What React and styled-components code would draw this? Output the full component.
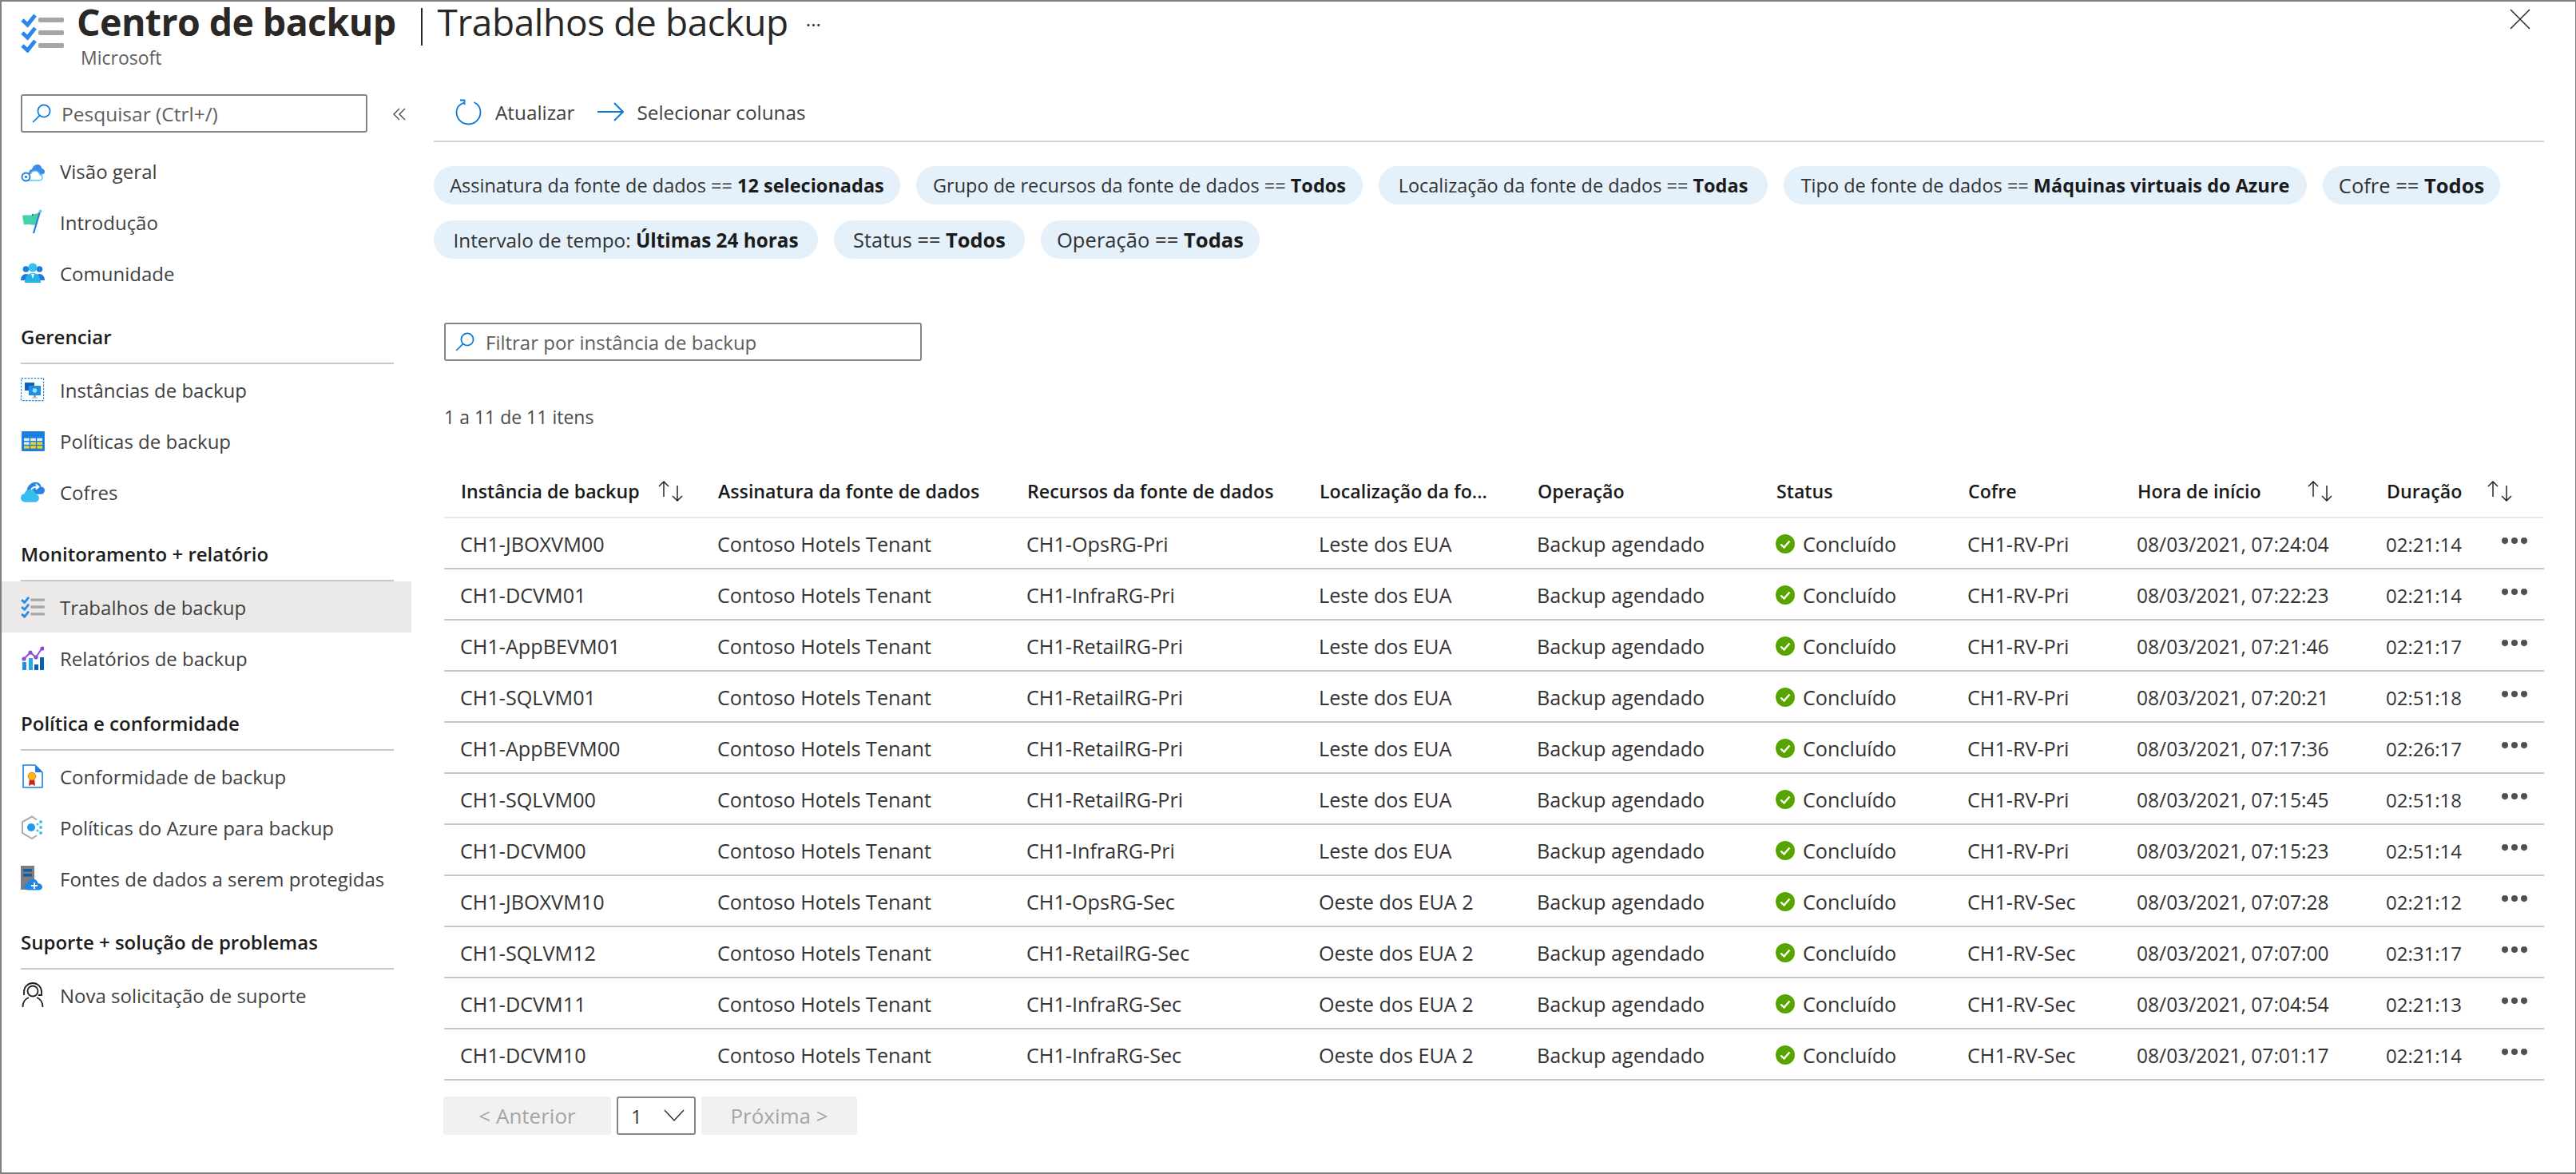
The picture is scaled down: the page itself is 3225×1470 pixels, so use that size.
import React from 'react';
import styled, { createGlobalStyle } from 'styled-components';

const Global = createGlobalStyle`
  html, body { margin: 0; padding: 0; background: #fff; }
  body { font-family: "Open Sans", "Noto Sans", sans-serif; color: #323130; }
  * { box-sizing: border-box; }
`;

const Page = styled.div`
  width: 3225px; height: 1470px; background: #fff;
  border: 2px solid #808080; border-right-width: 1px;
  display: flex; flex-direction: column; overflow: hidden;
`;
const Header = styled.header`
  height: 98px; display: flex; align-items: flex-start; padding: 0 0 0 24px; position: relative;
`;
const LogoSlot = styled.div`margin-top: 14px; width: 54px; height: 50px; flex: none;`;
const TitleBlock = styled.div`margin-left: 16px; display: flex; flex-direction: column;`;
const TitleRow = styled.div`display: flex; align-items: center; height: 46px; margin-top: 2px;`;
const Title = styled.h1`
  margin: 0; font-size: 46.500px; font-weight: 700; color: #292827; line-height: 46px; letter-spacing: -0.6px; white-space: nowrap;
`;
const Pipe = styled.span`width: 2px; height: 47px; background: #292827; margin: 13px 0 0 32px; flex: none;`;
const Sub = styled.h2`
  margin: 0 0 0 18px; font-size: 46px; font-weight: 400; color: #292827; line-height: 46px; letter-spacing: -0.4px; white-space: nowrap;
`;
const More = styled.span`margin: 8px 0 0 22px; font-size: 24px; line-height: 20px; color: #323130; letter-spacing: 0;`;
const Org = styled.div`font-size: 23px; color: #5f5e5c; line-height: 28px; margin-left: 5px; margin-top: 8px;`;
const Close = styled.div`position: absolute; right: 56px; top: 9px; width: 26px; height: 26px;`;

const Body = styled.div`flex: 1; display: flex; min-height: 0;`;
const Sidebar = styled.nav`width: 513px; flex: none; padding-top: 18px; display: flex; flex-direction: column;`;
const SearchRow = styled.div`display: flex; align-items: center; padding-left: 24px;`;
const SearchBox = styled.div`
  width: ${p => p.$w}px; height: 48px; border: 2px solid #858585; border-radius: 3px; display: flex; align-items: center;
  padding-left: ${p => p.$pad}px; gap: ${p => p.$gap}px; font-size: ${p => p.$fs || 24}px; color: #5f5e5c; flex: none;
`;
const Collapse = styled.div`margin-left: 32px; width: 16px; height: 16px;`;
const NavGroup = styled.div`display: flex; flex-direction: column; margin-top: ${p => p.$mt || 0}px;`;
const NavItem = styled.a`
  height: 64px; display: flex; align-items: center; padding-left: 24px; font-size: 24px; color: #3f3f3f;
  background: ${p => (p.$active ? '#ebeae9' : 'transparent')};
`;
const NavIcon = styled.span`width: 30px; height: 30px; flex: none; margin-right: 19px; display: flex; align-items: center; justify-content: center;`;
const SectionTitle = styled.div`
  height: ${p => p.$h}px; margin: 0 22px 0 24px; padding-bottom: 16px; display: flex; align-items: flex-end;
  border-bottom: 2px solid #c8c8c8; font-size: 24px; font-weight: 600; color: #1d1d1d;
`;

const Main = styled.main`flex: 1; min-width: 0; padding-left: 28px; display: flex; flex-direction: column;`;
const Toolbar = styled.div`
  width: 2642px; height: 78px; border-bottom: 2px solid #d3d3d3; display: flex; align-items: center; padding: 4px 0 0 27px; font-size: 24.300px; color: #3f3f3f;
`;
const ToolButton = styled.div`display: flex; align-items: center; gap: ${p => p.$gap}px; margin-right: 28px;`;
const ChipRow = styled.div`display: flex; gap: 20px; margin-top: ${p => p.$mt}px;`;
const Chip = styled.div`
  width: ${p => p.$w}px; height: 48px; border-radius: 24px; background: #e4f0fa; font-size: ${p => p.$fs || 23.500}px; display: flex; align-items: center; justify-content: center; color: #333; white-space: pre;
  b { font-weight: 700; color: #1b1b1b; }
`;
const FilterWrap = styled.div`margin: 80px 0 0 13px;`;
const Count = styled.div`margin: 52px 0 0 13px; height: 36px; line-height: 36px; font-size: 23px; color: #4a4a4a;`;
const Table = styled.div`margin: 42px 0 0 13px; width: 2629px;`;
const COLS = '322px 387px 366px 273px 299px 240px 212px 312px 1fr';
const HeadRow = styled.div`
  display: grid; grid-template-columns: ${COLS}; height: 67px; padding-left: 21px; align-items: center; border-bottom: 2px solid #e9e9e9;
  font-size: 23.200px; font-weight: 600; color: #1a1a1a;
`;
const HeadCell = styled.div`display: flex; align-items: center; gap: ${p => p.$gap || 0}px; white-space: nowrap;`;
const Row = styled.div`
  display: grid; grid-template-columns: ${COLS}; height: 64px; padding: 2px 0 0 20px; align-items: center; border-bottom: 2px solid #c8c8c8;
  font-size: 25.200px; color: #333; white-space: nowrap;
`;
const NumCell = styled.div`font-size: ${p => p.$fs}px;`;
const StatusCell = styled.div`display: flex; align-items: center; gap: 10px;`;
const EndCell = styled.div`display: flex; align-items: center; position: relative; font-size: 24px;`;
const Dots = styled.span`
  position: absolute; left: 145px; top: 50%; margin-top: -8px; display: flex; gap: 4px;
  i { width: 8px; height: 8px; border-radius: 50%; background: #505050; display: block; }
`;
const Pager = styled.div`display: flex; gap: 7px; margin: 20px 0 0 12px;`;
const PageBtn = styled.div`
  width: ${p => p.$w}px; height: 48px; border-radius: 3px; background: #f2f1f0; color: #a5a5a5; font-size: 26px; display: flex; align-items: center; justify-content: center;
`;
const PageSelect = styled.div`
  width: 99px; height: 48px; border: 2px solid #858585; border-radius: 3px; display: flex; align-items: center; justify-content: space-between; padding: 0 12px 0 16px; font-size: 24px; color: #333;
`;

const CheckList = ({ w = 54, h = 50 }) => (
  <svg width={w} height={h} viewBox="0 0 54 50" fill="none">
    <g stroke="#2b88e8" strokeWidth="5" strokeLinecap="butt">
      <path d="M2 9l6.5 6L18 3" /><path d="M2 25l6.5 6L18 19" /><path d="M2 41l6.5 6L18 35" />
    </g>
    <g fill="#a6a6a6">
      <rect x="22" y="6" width="32" height="6" rx="2" /><rect x="22" y="22" width="32" height="6" rx="2" /><rect x="22" y="38" width="32" height="6" rx="2" />
    </g>
  </svg>
);
const Magnifier = ({ s = 24 }) => (
  <svg width={s} height={s} viewBox="0 0 24 24" fill="none" stroke="#0a78d6" strokeWidth="1.7">
    <circle cx="15" cy="9" r="7.6" /><path d="M9.6 14.6L1.2 23" />
  </svg>
);
const IcoCloud = () => (
  <svg width="30" height="30" viewBox="0 0 30 30">
    <path d="M10 18c0-3 2-5 4-5 1-3 3-6 7-6 3 0 5 2 5.500 5 2 .3 3.500 2 3.500 4 0 2-1.500 3.500-3.500 3.500H12c-1 0-2-.5-2-1.500z" fill="#3b8dec" />
    <path d="M6 27h17c2.500 0 4-1.700 4-3.700 0-2-1.500-3.300-3.300-3.500-.5-2.800-3-4.800-5.700-4.800-2.500 0-4.600 1.500-5.500 3.700" fill="#fff" stroke="#5ec8f2" strokeWidth="1.500" />
    <circle cx="6.500" cy="22.500" r="5" fill="#fff" stroke="#1b79d8" strokeWidth="1.800" /><circle cx="6.500" cy="22.500" r="1.600" fill="#1b79d8" />
  </svg>
);
const IcoFlag = () => (
  <svg width="30" height="32" viewBox="0 0 30 32">
    <path d="M2 8c5-2 9 .5 13-1l8-3-4 15c-5 2-9-1-15 .5z" fill="#46d0ac" />
    <path d="M16 30L24 3" stroke="#1f7fe0" strokeWidth="2.200" /><circle cx="24.500" cy="2.500" r="2" fill="#7cc4f0" />
    <circle cx="15" cy="7" r="1.200" fill="#2a7f6f" />
  </svg>
);
const IcoPeople = () => (
  <svg width="30" height="26" viewBox="0 0 30 26">
    <circle cx="6.500" cy="8" r="3.800" fill="#1f7bd6" /><circle cx="23.500" cy="8" r="3.800" fill="#1f7bd6" />
    <path d="M0 22c0-5 3-8 6.500-8S13 17 13 22z" fill="#1f7bd6" /><path d="M17 22c0-5 3-8 6.500-8s6.500 3 6.500 8z" fill="#1f7bd6" />
    <circle cx="15" cy="6" r="5.500" fill="#37bff0" /><path d="M5 25c0-8 4-12 10-12s10 4 10 12z" fill="#27b0e6" /><path d="M13 14l2 6 2-6z" fill="#fff" />
  </svg>
);
const IcoInstances = () => (
  <svg width="30" height="30" viewBox="0 0 30 30">
    <rect x=".6" y=".6" width="28" height="28" fill="none" stroke="#1f86e6" strokeWidth="1.100" strokeDasharray="2.500 1.500" />
    <rect x="5" y="6" width="12" height="10" fill="#0f62b8" /><rect x="10" y="10" width="15" height="12" fill="#1a90e8" />
    <circle cx="17.500" cy="16" r="2.800" fill="#9be2f7" /><rect x="16" y="22" width="3" height="2.500" fill="#9a9a9a" /><rect x="14" y="24.500" width="7" height="1.200" fill="#b5b5b5" />
  </svg>
);
const IcoTable = () => (
  <svg width="29" height="25" viewBox="0 0 30 26">
    <rect width="30" height="26" rx="1" fill="#1a7fe0" />
    <g fill="#dcecfb"><rect x="3" y="9" width="7" height="3.500" /><rect x="11.500" y="9" width="7" height="3.500" /><rect x="20" y="9" width="7" height="3.500" /><rect x="3" y="14" width="7" height="3.500" /></g>
    <g fill="#fbd116"><rect x="11.500" y="14" width="7" height="3.500" /><rect x="20" y="14" width="7" height="3.500" /><rect x="3" y="19" width="7" height="3.500" /><rect x="11.500" y="19" width="7" height="3.500" /><rect x="20" y="19" width="7" height="3.500" /></g>
  </svg>
);
const IcoVault = () => (
  <svg width="32" height="28" viewBox="0 0 32 28">
    <path d="M8 12c1-6 6-11 12-11 4 0 7 3 7 6 3 0 5 2 5 4.500S30 17 27 17H14z" fill="#2484e4" />
    <path d="M6 27.500C2.500 27.500 0 25 0 22c0-3 2-5.300 4.800-5.800C6 12.500 9 10.500 12.500 10.500c3.800 0 7 2.800 7.500 6.500 2.600.3 4.400 2.500 4.400 5 0 3-2.400 5.500-5.400 5.500z" fill="#38bdf0" />
    <path d="M14 11c1-3 4-4 9-4M20 3.500l4 3.500-4 3.500" fill="none" stroke="#fff" strokeWidth="2" />
  </svg>
);
const IcoReports = () => (
  <svg width="28" height="30" viewBox="0 0 28 30">
    <rect x="1" y="20" width="5" height="10" fill="#1f8fe0" /><rect x="9" y="15" width="5" height="15" fill="#2aa7e8" /><rect x="16" y="23" width="5" height="7" fill="#0d5fb0" /><rect x="23" y="14" width="5" height="16" fill="#0d5fb0" />
    <path d="M3 16l8-8 7 6 8-12" fill="none" stroke="#8d4bdc" strokeWidth="2" />
    <g fill="#8d4bdc"><circle cx="3" cy="16" r="2.600" /><circle cx="11" cy="8" r="2.600" /><circle cx="18" cy="14" r="2.600" /><circle cx="26" cy="3" r="2.600" /></g>
  </svg>
);
const IcoDoc = () => (
  <svg width="26" height="30" viewBox="0 0 26 30">
    <path d="M1 1h15l9 9v19H1z" fill="#fff" stroke="#1f7fe0" strokeWidth="1.600" /><path d="M16 1v9h9z" fill="#1f7fe0" />
    <path d="M9 18l-1 9 4-2 4 2-1-9z" fill="#c8232c" /><circle cx="12" cy="15" r="4.800" fill="#fbb916" stroke="#e77a17" strokeWidth="1" />
  </svg>
);
const IcoPolicy = () => (
  <svg width="30" height="30" viewBox="0 0 30 30">
    <path d="M20 5.500L14 1.500 2 8v14l12 7 6-4" fill="none" stroke="#a9a9a9" strokeWidth="2" />
    <circle cx="13" cy="15" r="5" fill="#1f9ce8" />
    <g fill="#3ec3ee"><circle cx="25" cy="8" r="2" /><circle cx="21" cy="11" r="1.600" /><circle cx="25" cy="15" r="2" /><circle cx="21" cy="19" r="1.600" /><circle cx="25" cy="22" r="2" /></g>
  </svg>
);
const IcoServer = () => (
  <svg width="30" height="32" viewBox="0 0 30 32">
    <rect x="0" y="0" width="17" height="30" fill="#7d7d7d" /><rect x="3" y="4" width="11" height="3.500" rx="1" fill="#0f5ca8" /><rect x="3" y="10" width="11" height="3.500" rx="1" fill="#0f5ca8" />
    <path d="M9 30.500c-3 0-5-2-5-4.500 0-2.500 2-4.500 4.500-4.500 1-3 3.500-5 6.500-5 3.500 0 6 2.500 6.500 5.500 3 .2 5.500 2 5.500 4.500 0 2.500-2 4-5 4z" fill="#2386e6" />
    <path d="M17 21v8M13 25h8" stroke="#fff" strokeWidth="1.800" />
  </svg>
);
const IcoSupport = () => (
  <svg width="28" height="32" viewBox="0 0 28 32" fill="none" stroke="#1e1e1e" strokeWidth="1.800">
    <circle cx="14" cy="11" r="6.500" /><path d="M3 16v-4a11 11 0 0122 0v4h-4" /><path d="M9 19c-5 2-7.500 6-7.500 12M19 19c5 2 7.500 6 7.500 12" />
  </svg>
);
const Refresh = () => (
  <svg width="33" height="33" viewBox="0 0 33 33" fill="none" stroke="#0a78d6" strokeWidth="1.800">
    <path d="M11 4.500C5.500 6.500 1.500 11 1.500 16.500a15 15 0 0030 0c0-5.500-3-10-8-12.500" /><path d="M6 1.500h5.500V7" />
  </svg>
);
const ArrowRight = () => (
  <svg width="34" height="26" viewBox="0 0 34 26" fill="none" stroke="#0a78d6" strokeWidth="2">
    <path d="M0 13h32M21 2l11 11-11 11" />
  </svg>
);
const Sort = () => (
  <svg width="32" height="26" viewBox="0 0 32 26" fill="none" stroke="#262626" strokeWidth="1.500">
    <path d="M7 20V1M1 7l6-6 6 6" /><path d="M24 6v19M18 19l6 6 6-6" />
  </svg>
);
const Success = () => (
  <svg width="24" height="24" viewBox="0 0 24 24">
    <circle cx="12" cy="12" r="12" fill="#57a300" /><path d="M6.500 12.500l4 4 7-8" fill="none" stroke="#fff" strokeWidth="2.400" />
  </svg>
);

const rows = [
  ['CH1-JBOXVM00', 'CH1-OpsRG-Pri', 'Leste dos EUA', 'CH1-RV-Pri', '08/03/2021, 07:24:04', '02:21:14'],
  ['CH1-DCVM01', 'CH1-InfraRG-Pri', 'Leste dos EUA', 'CH1-RV-Pri', '08/03/2021, 07:22:23', '02:21:14'],
  ['CH1-AppBEVM01', 'CH1-RetailRG-Pri', 'Leste dos EUA', 'CH1-RV-Pri', '08/03/2021, 07:21:46', '02:21:17'],
  ['CH1-SQLVM01', 'CH1-RetailRG-Pri', 'Leste dos EUA', 'CH1-RV-Pri', '08/03/2021, 07:20:21', '02:51:18'],
  ['CH1-AppBEVM00', 'CH1-RetailRG-Pri', 'Leste dos EUA', 'CH1-RV-Pri', '08/03/2021, 07:17:36', '02:26:17'],
  ['CH1-SQLVM00', 'CH1-RetailRG-Pri', 'Leste dos EUA', 'CH1-RV-Pri', '08/03/2021, 07:15:45', '02:51:18'],
  ['CH1-DCVM00', 'CH1-InfraRG-Pri', 'Leste dos EUA', 'CH1-RV-Pri', '08/03/2021, 07:15:23', '02:51:14'],
  ['CH1-JBOXVM10', 'CH1-OpsRG-Sec', 'Oeste dos EUA 2', 'CH1-RV-Sec', '08/03/2021, 07:07:28', '02:21:12'],
  ['CH1-SQLVM12', 'CH1-RetailRG-Sec', 'Oeste dos EUA 2', 'CH1-RV-Sec', '08/03/2021, 07:07:00', '02:31:17'],
  ['CH1-DCVM11', 'CH1-InfraRG-Sec', 'Oeste dos EUA 2', 'CH1-RV-Sec', '08/03/2021, 07:04:54', '02:21:13'],
  ['CH1-DCVM10', 'CH1-InfraRG-Sec', 'Oeste dos EUA 2', 'CH1-RV-Sec', '08/03/2021, 07:01:17', '02:21:14'],
];

const Item = ({ icon, children, active }) => (
  <NavItem $active={active}><NavIcon>{icon}</NavIcon>{children}</NavItem>
);

export default function App() {
  return (
    <Page>
      <Global />
      <Header>
        <LogoSlot><CheckList /></LogoSlot>
        <TitleBlock>
          <TitleRow>
            <Title>Centro de backup</Title>
            <Pipe />
            <Sub>Trabalhos de backup</Sub>
            <More>···</More>
          </TitleRow>
          <Org>Microsoft</Org>
        </TitleBlock>
        <Close>
          <svg width="26" height="26" viewBox="0 0 26 26" stroke="#2b2b2b" strokeWidth="1.500"><path d="M1 1l24 24M25 1L1 25" /></svg>
        </Close>
      </Header>
      <Body>
        <Sidebar>
          <SearchRow>
            <SearchBox $w={434} $pad={12} $gap={13} $fs={24.500}><Magnifier />Pesquisar (Ctrl+/)</SearchBox>
            <Collapse>
              <svg width="16" height="16" viewBox="0 0 16 16" fill="none" stroke="#444" strokeWidth="1.300"><path d="M8 1L1 8l7 7M15 1L8 8l7 7" /></svg>
            </Collapse>
          </SearchRow>
          <NavGroup $mt={16}>
            <Item icon={<IcoCloud />}>Visão geral</Item>
            <Item icon={<IcoFlag />}>Introdução</Item>
            <Item icon={<IcoPeople />}>Comunidade</Item>
          </NavGroup>
          <SectionTitle $h={82}>Gerenciar</SectionTitle>
          <NavGroup>
            <Item icon={<IcoInstances />}>Instâncias de backup</Item>
            <Item icon={<IcoTable />}>Políticas de backup</Item>
            <Item icon={<IcoVault />}>Cofres</Item>
          </NavGroup>
          <SectionTitle $h={80}>Monitoramento + relatório</SectionTitle>
          <NavGroup>
            <Item active icon={<CheckList w={30} h={28} />}>Trabalhos de backup</Item>
            <Item icon={<IcoReports />}>Relatórios de backup</Item>
          </NavGroup>
          <SectionTitle $h={84}>Política e conformidade</SectionTitle>
          <NavGroup>
            <Item icon={<IcoDoc />}>Conformidade de backup</Item>
            <Item icon={<IcoPolicy />}>Políticas do Azure para backup</Item>
            <Item icon={<IcoServer />}>Fontes de dados a serem protegidas</Item>
          </NavGroup>
          <SectionTitle $h={82}>Suporte + solução de problemas</SectionTitle>
          <NavGroup>
            <Item icon={<IcoSupport />}>Nova solicitação de suporte</Item>
          </NavGroup>
        </Sidebar>
        <Main>
          <Toolbar>
            <ToolButton $gap={17}><Refresh />Atualizar</ToolButton>
            <ToolButton $gap={16}><ArrowRight />Selecionar colunas</ToolButton>
          </Toolbar>
          <ChipRow $mt={30}>
            <Chip $w={584}>Assinatura da fonte de dados == <b>12 selecionadas</b></Chip>
            <Chip $w={559}>Grupo de recursos da fonte de dados == <b>Todos</b></Chip>
            <Chip $w={487}>Localização da fonte de dados == <b>Todas</b></Chip>
            <Chip $w={655}>Tipo de fonte de dados == <b>Máquinas virtuais do Azure</b></Chip>
            <Chip $w={222} $fs={25.500}>Cofre == <b>Todos</b></Chip>
          </ChipRow>
          <ChipRow $mt={20}>
            <Chip $w={481} $fs={24.300}>Intervalo de tempo: <b>Últimas 24 horas</b></Chip>
            <Chip $w={239} $fs={25.400}>Status == <b>Todos</b></Chip>
            <Chip $w={274} $fs={25.600}>Operação == <b>Todas</b></Chip>
          </ChipRow>
          <FilterWrap>
            <SearchBox $w={598} $pad={12} $gap={14}><Magnifier />Filtrar por instância de backup</SearchBox>
          </FilterWrap>
          <Count>1 a 11 de 11 itens</Count>
          <Table>
            <HeadRow>
              <HeadCell $gap={23}>Instância de backup<Sort /></HeadCell>
              <HeadCell>Assinatura da fonte de dados</HeadCell>
              <HeadCell>Recursos da fonte de dados</HeadCell>
              <HeadCell>Localização da fo...</HeadCell>
              <HeadCell>Operação</HeadCell>
              <HeadCell>Status</HeadCell>
              <HeadCell>Cofre</HeadCell>
              <HeadCell $gap={58}>Hora de início<Sort /></HeadCell>
              <HeadCell $gap={32}>Duração<Sort /></HeadCell>
            </HeadRow>
            {rows.map(r => (
              <Row key={r[0]}>
                <div>{r[0]}</div>
                <div>Contoso Hotels Tenant</div>
                <div>{r[1]}</div>
                <div>{r[2]}</div>
                <div>Backup agendado</div>
                <StatusCell><Success />Concluído</StatusCell>
                <div>{r[3]}</div>
                <NumCell $fs={24.600}>{r[4]}</NumCell>
                <EndCell>{r[5]}<Dots><i /><i /><i /></Dots></EndCell>
              </Row>
            ))}
          </Table>
          <Pager>
            <PageBtn $w={210}>{'< Anterior'}</PageBtn>
            <PageSelect>1
              <svg width="26" height="16" viewBox="0 0 26 16" fill="none" stroke="#2b2b2b" strokeWidth="1.500"><path d="M1 1l12 13L25 1" /></svg>
            </PageSelect>
            <PageBtn $w={195}>{'Próxima >'}</PageBtn>
          </Pager>
        </Main>
      </Body>
    </Page>
  );
}
